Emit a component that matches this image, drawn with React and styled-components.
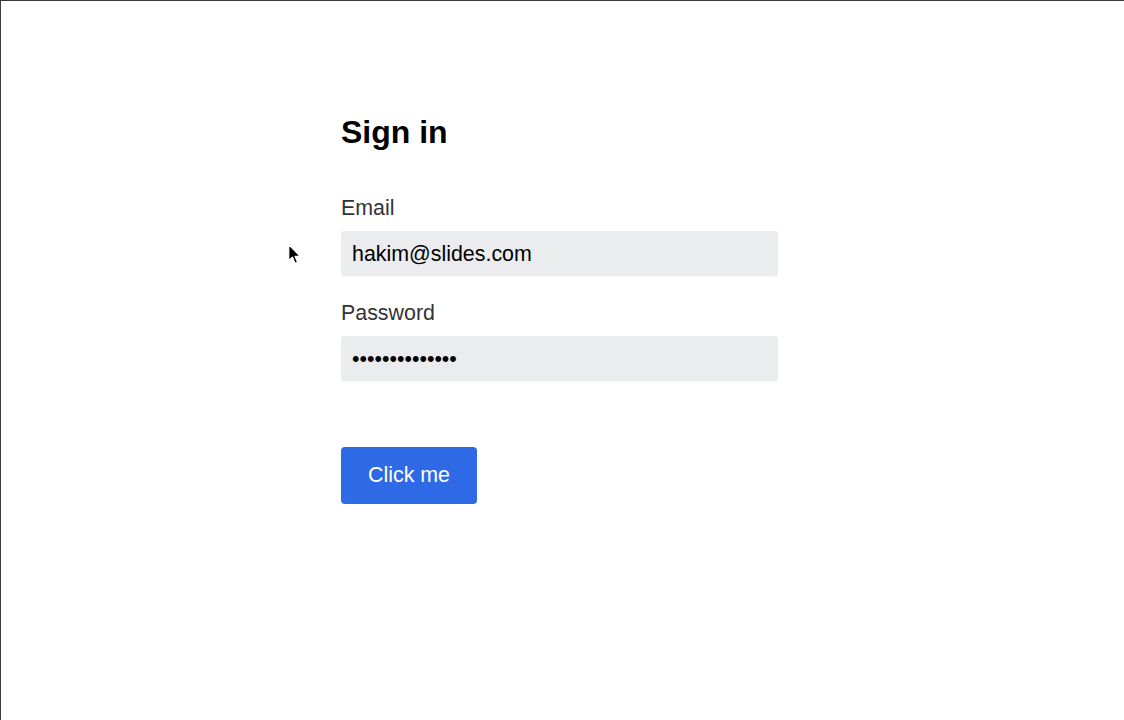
import React from "react";
import styled, { createGlobalStyle } from "styled-components";

const Global = createGlobalStyle`
  html, body { margin: 0; padding: 0; background: #fff; }
  body { font-family: "Liberation Sans", Arial, sans-serif; }
  * { box-sizing: border-box; }
`;

const Page = styled.div`
  position: relative;
  width: 1124px;
  height: 720px;
  border-top: 1px solid #3a3a3a;
  border-left: 1px solid #3a3a3a;
  padding: 105px 0 0 340px;
  overflow: hidden;
`;

const Form = styled.form`
  width: 437px;
  display: flex;
  flex-direction: column;
`;

const Title = styled.h1`
  margin: 0 0 37px;
  font-size: 32px;
  line-height: 52px;
  font-weight: 700;
  color: #000;
`;

const Field = styled.div`
  display: flex;
  flex-direction: column;
  margin-bottom: ${(p) => p.$gap}px;
`;

const Label = styled.label`
  font-size: 21.4px;
  line-height: 24px;
  color: #333;
  padding-top: 1px;
  margin-bottom: 11px;
`;

const Input = styled.input`
  height: 45px;
  border: none;
  outline: none;
  border-radius: 3px;
  background: #eaeced;
  padding: 2px 11px 0;
  font-family: "Liberation Sans", Arial, sans-serif;
  font-size: 21.4px;
  color: #000;
  box-shadow: 0 1px 1px rgba(0, 0, 0, 0.03);
`;

const Button = styled.button`
  align-self: flex-start;
  height: 57px;
  padding: 0 27px;
  border: none;
  border-radius: 4px;
  background: #2f6ae6;
  color: #fff;
  font-family: "Liberation Sans", Arial, sans-serif;
  font-size: 21.4px;
  cursor: pointer;
`;

const Cursor = styled.svg`
  position: absolute;
  left: 286px;
  top: 242px;
`;

export default function App() {
  return (
    <>
      <Global />
      <Page>
        <Form onSubmit={(e) => e.preventDefault()}>
          <Title>Sign in</Title>
          <Field $gap={24}>
            <Label>Email</Label>
            <Input type="text" defaultValue="hakim@slides.com" />
          </Field>
          <Field $gap={66}>
            <Label>Password</Label>
            <Input type="password" defaultValue="slidespassword" />
          </Field>
          <Button type="button">Click me</Button>
        </Form>
        <Cursor width="15" height="23" viewBox="0 0 14 22">
          <path
            d="M1.5 1.5 L1.5 17 L5 13.5 L7.5 19.5 L10 18.5 L7.6 12.8 L12.5 12.8 Z"
            fill="#000"
            stroke="#fff"
            strokeWidth="1.2"
            strokeLinejoin="round"
          />
        </Cursor>
      </Page>
    </>
  );
}
